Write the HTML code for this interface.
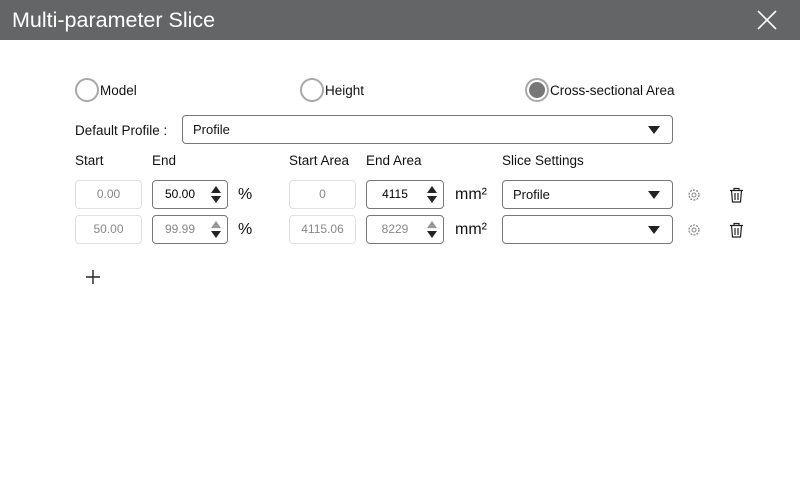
<!DOCTYPE html>
<html><head><meta charset="utf-8"><style>
*{margin:0;padding:0;box-sizing:border-box}
body{width:800px;height:500px;background:#fff;font-family:"Liberation Sans",sans-serif;position:relative;overflow:hidden;color:#111}
.a{position:absolute}
.title{left:0;top:0;width:800px;height:40px;background:#646566;color:#fff;font-size:21.5px;line-height:40px;padding-left:12px}
.t{font-size:13.5px;white-space:nowrap}
.radio{width:24px;height:24px;border:2px solid #a8a8a8;border-radius:50%;background:#fff}
.box{border:1px solid #e0e0e0;border-radius:4px;font-size:12px;color:#888;text-align:center;height:29px;line-height:27px}
.spin{border:1px solid #777;border-radius:4px;font-size:12px;height:29px;line-height:27px;text-align:center;padding-right:20px}
.combo{border:1px solid #777;border-radius:4px;font-size:13px;height:29px;line-height:27px;padding-left:10px}
.tri{position:absolute;right:12px;top:10px;width:0;height:0;border-left:6px solid transparent;border-right:6px solid transparent;border-top:8px solid #222}
.up{position:absolute;right:6px;top:5px;border-left:5px solid transparent;border-right:5px solid transparent;border-bottom:7px solid #222}
.dn{position:absolute;right:6px;bottom:5px;border-left:5px solid transparent;border-right:5px solid transparent;border-top:7px solid #222}
</style></head><body>
<div class="a title">Multi-parameter Slice</div>
<svg class="a" style="left:756px;top:9px" width="22" height="22"><path d="M2 2L20 20M20 2L2 20" stroke="#fff" stroke-width="1.6"/></svg>

<div class="a radio" style="left:75px;top:78px"></div><div class="a t" style="left:100px;top:83px">Model</div>
<div class="a radio" style="left:300px;top:78px"></div><div class="a t" style="left:325px;top:83px">Height</div>
<div class="a radio" style="left:525px;top:78px"><div style="position:absolute;left:2px;top:2px;width:16px;height:16px;border-radius:50%;background:#777"></div></div><div class="a t" style="left:550px;top:83px">Cross-sectional Area</div>

<div class="a t" style="left:75px;top:123px">Default Profile :</div>
<div class="a combo" style="left:182px;top:115px;width:491px">Profile<div class="tri"></div></div>

<div class="a t" style="left:75px;top:153px">Start</div>
<div class="a t" style="left:152px;top:153px">End</div>
<div class="a t" style="left:289px;top:153px">Start Area</div>
<div class="a t" style="left:366px;top:153px">End Area</div>
<div class="a t" style="left:502px;top:153px">Slice Settings</div>

<div class="a box" style="left:75px;top:180px;width:67px">0.00</div>
<div class="a spin" style="left:152px;top:180px;width:76px;color:#000">50.00<div class="up"></div><div class="dn"></div></div>
<div class="a" style="left:238px;top:186px;font-size:16px">%</div>
<div class="a box" style="left:289px;top:180px;width:67px">0</div>
<div class="a spin" style="left:366px;top:180px;width:78px;color:#000">4115<div class="up"></div><div class="dn"></div></div>
<div class="a" style="left:455px;top:186px;font-size:16px">mm²</div>
<div class="a combo" style="left:502px;top:180px;width:171px">Profile<div class="tri"></div></div>

<div class="a box" style="left:75px;top:215px;width:67px">50.00</div>
<div class="a spin" style="left:152px;top:215px;width:76px;color:#888">99.99<div class="up" style="border-bottom-color:#999"></div><div class="dn"></div></div>
<div class="a" style="left:238px;top:221px;font-size:16px">%</div>
<div class="a box" style="left:289px;top:215px;width:67px">4115.06</div>
<div class="a spin" style="left:366px;top:215px;width:78px;color:#888">8229<div class="up" style="border-bottom-color:#999"></div><div class="dn"></div></div>
<div class="a" style="left:455px;top:221px;font-size:16px">mm²</div>
<div class="a combo" style="left:502px;top:215px;width:171px"><div class="tri"></div></div>

<svg class="a" style="left:687px;top:188px" width="14" height="14"><circle cx="7" cy="7" r="5" fill="none" stroke="#888" stroke-width="1.3" stroke-dasharray="2 1.2"/><circle cx="7" cy="7" r="2" fill="none" stroke="#888"/></svg>
<svg class="a" style="left:687px;top:223px" width="14" height="14"><circle cx="7" cy="7" r="5" fill="none" stroke="#888" stroke-width="1.3" stroke-dasharray="2 1.2"/><circle cx="7" cy="7" r="2" fill="none" stroke="#888"/></svg>
<svg class="a" style="left:729px;top:187px" width="15" height="16"><path d="M1 3.5H14M5 3.5V1.5H10V3.5M2.5 3.5L3.5 15H11.5L12.5 3.5M6 6V13M9 6V13" fill="none" stroke="#222" stroke-width="1.2"/></svg>
<svg class="a" style="left:729px;top:222px" width="15" height="16"><path d="M1 3.5H14M5 3.5V1.5H10V3.5M2.5 3.5L3.5 15H11.5L12.5 3.5M6 6V13M9 6V13" fill="none" stroke="#222" stroke-width="1.2"/></svg>

<svg class="a" style="left:85px;top:269px" width="16" height="16"><path d="M8 1V15M1 8H15" stroke="#222" stroke-width="1.4"/></svg>
</body></html>
